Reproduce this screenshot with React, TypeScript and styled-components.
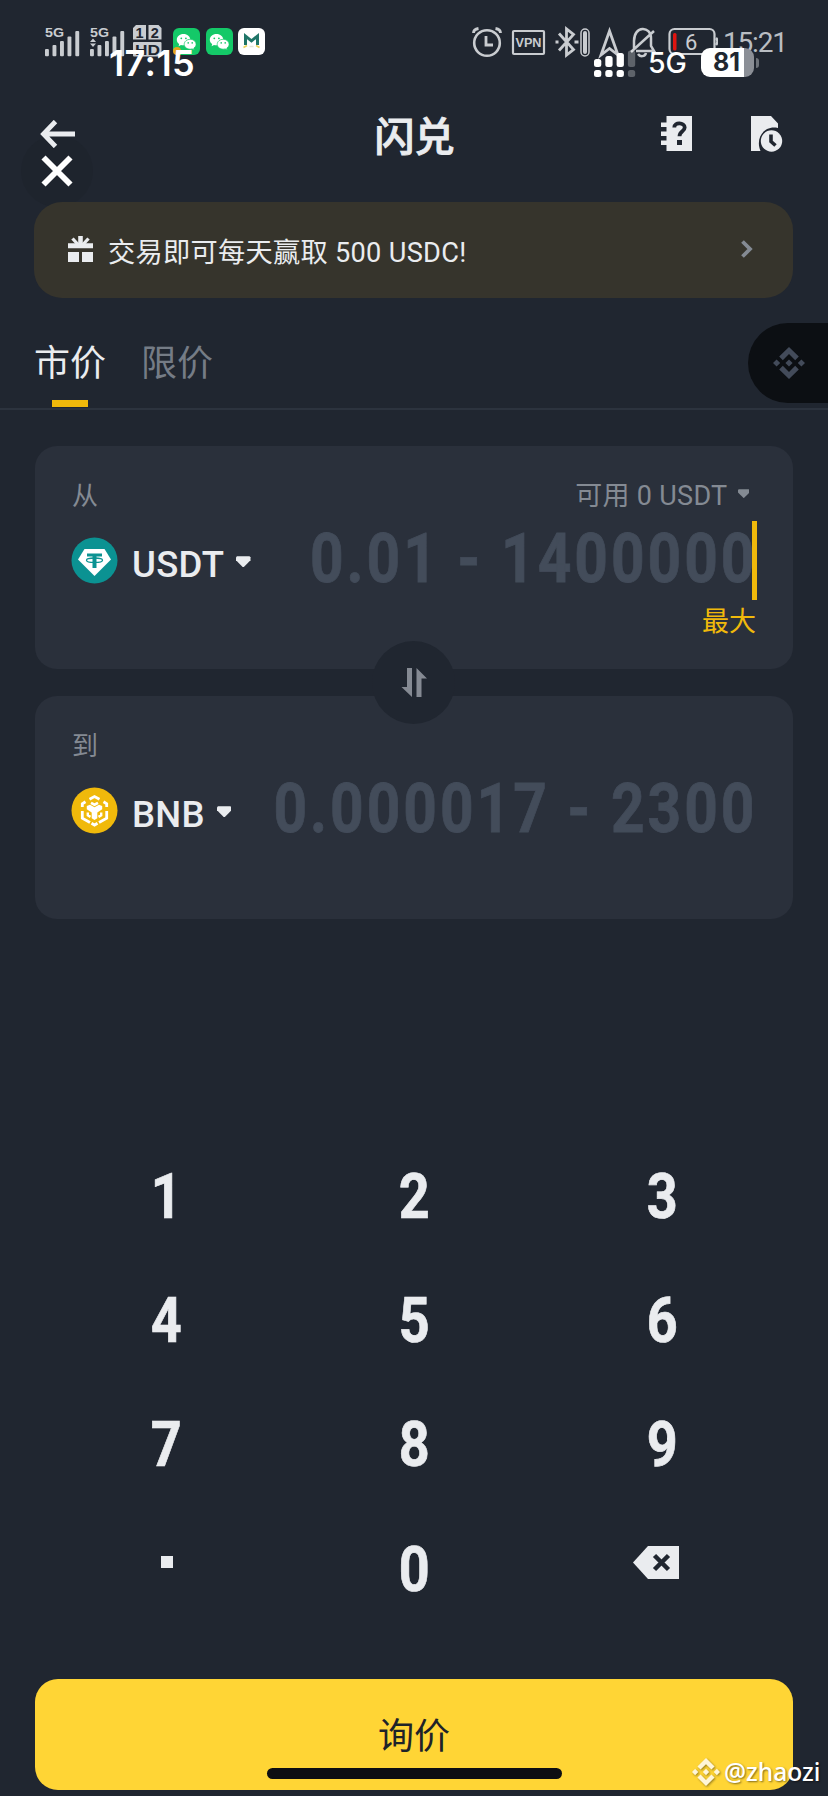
import React from 'react';
import styled, { createGlobalStyle } from 'styled-components';

const SANS = `Roboto, "Noto Sans CJK SC", sans-serif`;
const colors = {
  bg: '#202630',
  card: '#2a303b',
  text: '#eaecef',
  muted: '#848a93',
  faint: '#434c5a',
  gold: '#f0b90b',
  dim: '#c9ccd0',
};

const GlobalStyle = createGlobalStyle`
  * { box-sizing: border-box; }
  html, body { margin: 0; padding: 0; background: ${colors.bg}; }
  body { font-family: ${SANS}; color: ${colors.text}; }
  svg { display: block; flex: none; }
  button { background: none; border: 0; padding: 0; margin: 0; font: inherit; color: inherit; }
`;

const Screen = styled.div`
  position: relative;
  width: 828px;
  height: 1796px;
  overflow: hidden;
  background: ${colors.bg};
  display: flex;
  flex-direction: column;
`;

const DeviceBar = styled.div`
  display: flex;
  justify-content: space-between;
  height: 100px;
  padding: 25px 43px 0 45px;
  flex: none;
`;

const BarGroup = styled.div<{ $gap: number; $indent?: number }>`
  display: flex;
  align-items: flex-start;
  gap: ${(p) => p.$gap}px;
  margin-left: ${(p) => p.$indent ?? 0}px;
  height: 34px;
`;

const AppBadge = styled.div<{ $bg: string }>`
  width: 27px;
  height: 27px;
  margin-top: 3px;
  border-radius: 6px;
  background: ${(p) => p.$bg};
  display: flex;
  align-items: center;
  justify-content: center;
`;

const DeviceClock = styled.div`
  font-size: 28px;
  font-weight: 400;
  line-height: 34px;
  letter-spacing: -1.2px;
  color: #b9bdc2;
  padding-top: 1px;
  width: 62px;
  white-space: nowrap;
`;

const OverlayClock = styled.div`
  position: absolute;
  left: 109px;
  top: 42px;
  font-family: Inter, sans-serif;
  font-weight: 600;
  font-size: 36px;
  line-height: 42px;
  letter-spacing: 0.4px;
  color: #fff;
`;

const OverlayStatus = styled.div`
  position: absolute;
  left: 594px;
  top: 48px;
  height: 30px;
  display: flex;
  align-items: center;
  font-family: Inter, sans-serif;
  color: #fff;
`;

const NetworkLabel = styled.span`
  margin-left: 12px;
  width: 53px;
  font-size: 28.5px;
  font-weight: 500;
  line-height: 30px;
`;

const BatteryPill = styled.div`
  width: 53px;
  height: 29px;
  margin-top: -2px;
  border-radius: 9px;
  background: linear-gradient(90deg, #fff 0 43px, #8b8f96 43px);
  color: ${colors.bg};
  font-size: 25px;
  font-weight: 700;
  line-height: 29px;
  padding-left: 12px;
`;

const BatteryNub = styled.div`
  width: 3px;
  height: 10px;
  margin-left: 2px;
  border-radius: 0 4px 4px 0;
  background: #6d7279;
`;

const Header = styled.header`
  position: relative;
  z-index: 1;
  display: grid;
  grid-template-columns: 1fr auto 1fr;
  align-items: center;
  height: 68px;
  padding: 0 45px 0 40px;
  flex: none;
`;

const Title = styled.h1`
  margin: 0;
  padding: 8px 0 0 6px;
  font-size: 40px;
  font-weight: 500;
  line-height: 56px;
  -webkit-text-stroke: 0.9px ${colors.text};
`;

const HeaderActions = styled.div`
  display: flex;
  justify-content: flex-end;
  gap: 59px;
`;

const CloseButton = styled.button`
  position: absolute;
  left: 21px;
  top: 135px;
  width: 72px;
  height: 72px;
  border-radius: 50%;
  background: #1e242d;
  display: flex;
  align-items: center;
  justify-content: center;
`;

const Banner = styled.div`
  position: relative;
  display: flex;
  align-items: center;
  height: 96px;
  margin: 34px 35px 0 34px;
  padding: 0 40px 0 34px;
  border-radius: 28px;
  background: #36342c;
  font-size: 27.2px;
  line-height: 40px;
  flex: none;
`;

const BannerText = styled.span`
  flex: 1;
  padding: 5px 0 0 15px;
  letter-spacing: 0.3px;
  white-space: nowrap;
`;

const Tabs = styled.nav`
  display: flex;
  gap: 35px;
  height: 112px;
  padding: 38px 34px 1px;
  border-bottom: 2px solid #2c333e;
  flex: none;
`;

const Tab = styled.div<{ $active?: boolean }>`
  display: flex;
  flex-direction: column;
  align-items: center;
  justify-content: space-between;
  font-size: 36px;
  line-height: 56px;
  color: ${(p) => (p.$active ? colors.text : '#757c86')};
  &::after {
    content: '';
    width: 36px;
    height: 7px;
    background: ${(p) => (p.$active ? colors.gold : 'transparent')};
  }
`;

const FloatButton = styled.button`
  position: absolute;
  right: 0;
  top: 323px;
  width: 80px;
  height: 80px;
  border-radius: 40px 0 0 40px;
  background: #0c0f13;
  display: flex;
  align-items: center;
  padding-left: 25px;
`;

const Cards = styled.section`
  position: relative;
  display: flex;
  flex-direction: column;
  gap: 27px;
  padding: 36px 35px 0;
  flex: none;
`;

const Card = styled.div`
  height: 223px;
  border-radius: 22px;
  background: ${colors.card};
  padding: 30px 36px 0;
`;

const LabelRow = styled.div`
  display: flex;
  justify-content: space-between;
  align-items: center;
  height: 40px;
  padding-left: 1px;
  font-size: 26px;
  line-height: 40px;
  color: ${colors.muted};
`;

const Available = styled.div`
  display: flex;
  align-items: center;
  gap: 10px;
  padding-right: 8px;
  font-size: 27px;
  letter-spacing: 0.3px;
  svg { margin-top: -5px; }
`;

const AmountRow = styled.div`
  display: flex;
  align-items: center;
  height: 88px;
`;

const Symbol = styled.span`
  margin: 9px 12px 0 14px;
  font-size: 36.5px;
  font-weight: 500;
  line-height: 44px;
  letter-spacing: 0.3px;
`;

const Amount = styled.div`
  position: relative;
  flex: 1;
  min-width: 0;
  display: flex;
  justify-content: flex-end;
  height: 80px;
  white-space: nowrap;
`;

const Range = styled.span`
  font-size: 69px;
  font-weight: 700;
  line-height: 78px;
  letter-spacing: 3.5px;
  color: ${colors.faint};
  -webkit-text-stroke: 0.8px ${colors.faint};
  transform: scaleX(0.85);
  transform-origin: right center;
`;

const Caret = styled.i`
  position: absolute;
  right: 0;
  top: 1px;
  width: 5px;
  height: 79px;
  background: ${colors.gold};
`;

const MaxLink = styled.div`
  text-align: right;
  font-size: 27px;
  line-height: 36px;
  padding-right: 1px;
  color: ${colors.gold};
`;

const SwapButton = styled.button`
  position: absolute;
  left: 372px;
  top: 231px;
  width: 83px;
  height: 83px;
  border-radius: 50%;
  background: ${colors.bg};
  display: flex;
  align-items: center;
  justify-content: center;
`;

const Keypad = styled.div`
  display: grid;
  grid-template-columns: repeat(3, 248px);
  grid-auto-rows: 124.4px;
  justify-content: center;
  margin-top: 213px;
  flex: none;
`;

const Key = styled.button`
  display: flex;
  align-items: center;
  justify-content: center;
  font-size: 63.5px;
  font-weight: 700;
  line-height: 76px;
`;

const Digit = styled.span`
  margin-top: 5px;
  transform: scaleX(0.85);
  -webkit-text-stroke: 0.7px ${colors.text};
`;

const DotKey = styled.span`
  width: 12px;
  height: 12px;
  background: ${colors.text};
  margin: 0 0 11px 2px;
`;

const KeyIcon = styled.span`
  margin: 0 12px 10px 0;
`;

const QuoteButton = styled.button`
  height: 111px;
  margin: auto 35px 6px;
  padding-top: 5px;
  border-radius: 23px;
  background: #ffd535;
  color: #1e2329;
  font-size: 36px;
  line-height: 106px;
  flex: none;
`;

const HomeIndicator = styled.div`
  position: absolute;
  left: 267px;
  top: 1768px;
  width: 295px;
  height: 11px;
  border-radius: 6px;
  background: #0d0e12;
`;

const Watermark = styled.div`
  position: absolute;
  left: 692px;
  top: 1754px;
  height: 36px;
  display: flex;
  align-items: center;
  gap: 4px;
  font-family: "Noto Sans", sans-serif;
  font-size: 24.6px;
  font-weight: 500;
  line-height: 36px;
  color: #fff;
  text-shadow: 1px 1px 2px rgba(0, 0, 0, 0.5);
  svg { filter: drop-shadow(1px 1px 1px rgba(0, 0, 0, 0.4)); }
`;

const Signal = ({ data = false }: { data?: boolean }) => (
  <svg width="35" height="32" viewBox="0 0 35 32" fill={colors.dim}>
    <text x="0" y="12.2" fontFamily="Liberation Sans" fontWeight="700" fontSize="12.5" textLength="19" lengthAdjust="spacingAndGlyphs">5G</text>
    {data && <path d="M0 17 3 13.500 6 17zM0 18.500 3 22 6 18.500z" />}
    <rect x="0" y="24" width="3.900" height="7.300" rx="1" />
    <rect x="7.500" y="20" width="3.900" height="11.300" rx="1" />
    <rect x="15" y="16" width="3.900" height="15.300" rx="1" />
    <rect x="22.500" y="11.500" width="3.900" height="19.800" rx="1" />
    <rect x="30.300" y="6" width="3.900" height="25.300" rx="1" />
  </svg>
);

const SimHd = () => (
  <svg width="29" height="32" viewBox="0 0 29 32">
    <g fill={colors.dim}>
      <path d="M3 0H13V14.500H0V3zM15.500 0H25.500L28.500 3V14.500H15.500z" />
      <rect y="17" width="28.500" height="14.500" rx="1" />
    </g>
    <g fill={colors.bg} fontFamily="Liberation Sans" fontWeight="700">
      <text x="2.500" y="12.500" fontSize="14.500">1</text>
      <text x="17.800" y="12.500" fontSize="14.500">2</text>
      <text x="2" y="30" fontSize="15.500" textLength="25" lengthAdjust="spacingAndGlyphs">HD</text>
    </g>
  </svg>
);

const WeChat = () => (
  <svg width="21" height="18" viewBox="0 0 21 18">
    <path d="M7.500 1C3.600 1 .8 3.500.8 6.700c0 1.800.9 3.300 2.400 4.400L2.600 13.200 5 12c4.500 1 9.300-1.500 9.300-5.300C14.300 3.500 11.300 1 7.500 1z" fill="#fff" />
    <path d="M14.200 6.300c-3.300 0-6 2.200-6 5s2.700 4.900 6 4.900c.7 0 1.400-.1 2-.3l2.100 1.100-.5-1.900c1.400-.9 2.300-2.300 2.300-3.800 0-2.800-2.600-5-5.900-5z" fill="#fff" stroke="#14c968" strokeWidth=".7" />
    <g fill="#14c968"><circle cx="5.300" cy="5.300" r=".9" /><circle cx="9.900" cy="5.300" r=".9" /><circle cx="12.200" cy="9.900" r=".8" /><circle cx="16.200" cy="9.900" r=".8" /></g>
  </svg>
);

const MLogo = () => (
  <svg width="19" height="19" viewBox="0 0 19 19" fill="none">
    <path d="M3.500 13V4L9.500 8.800 15.500 4V13" stroke="#1f7568" strokeWidth="3" />
    <path d="M1.500 15.500 5 13.500M17.500 15.500 14 13.500" stroke="#ead45a" strokeWidth="1.600" />
    <path d="M7.500 14.500h4" stroke="#e5e5d8" strokeWidth="1.500" />
  </svg>
);

const OrangeDot = styled.i`
  position: absolute;
  left: 173px;
  top: 47px;
  width: 8px;
  height: 8px;
  border-radius: 50%;
  background: #e5a61c;
`;

const line = { fill: 'none', stroke: colors.dim, strokeWidth: 2.2 };

const DeviceIcons = () => (
  <svg width="246" height="34" viewBox="472 25 246 34" {...line}>
    <circle cx="487" cy="43" r="12.800" strokeWidth="2.600" />
    <path d="M486 36v9h7M473.500 33c0-2 2-4 5-4.500M500.500 33c0-2-2-4-5-4.500" strokeWidth="2.800" />
    <rect x="513" y="31" width="31" height="23" rx="1" />
    <text x="515.500" y="47" fontFamily="Liberation Sans" fontWeight="700" fontSize="12.500" textLength="26" lengthAdjust="spacingAndGlyphs" fill={colors.dim} stroke="none">VPN</text>
    <path d="M559 33.500 573.500 49.500 566.500 55V29L573.500 34.500 559 50.500" strokeWidth="2.800" />
    <path d="M555.500 42h3M574.500 42h4" strokeWidth="3" />
    <rect x="581" y="29" width="8" height="27" rx="4" strokeWidth="1.500" />
    <rect x="583" y="31" width="4" height="23" rx="2" fill={colors.dim} stroke="none" />
    <path d="M609.500 31 601 55 609.500 48.500 618 55z" strokeWidth="2.800" />
    <path d="M634 50V41c0-16 17-15 17-3v8l3 5h-18M631 52 654 31M638 54c2 3 7 3 8-1" strokeWidth="2.500" />
    <rect x="669.500" y="29" width="45" height="25" rx="5" />
    <path d="M716 38q3 3 0 7" strokeWidth="2.500" />
    <rect x="673" y="33" width="3.500" height="17.500" rx="1.500" fill="#e01510" stroke="none" />
    <text x="685" y="49.500" fontFamily="Roboto" fontSize="22" fill={colors.dim} stroke="none">6</text>
  </svg>
);

const CellDots = () => (
  <svg width="42" height="27" viewBox="0 0 42 27" fill="#fff">
    {[0, 11.3, 22.6, 33.9].map((x, i) => (
      <g key={x} opacity={i === 3 ? 0.28 : 1}>
        <rect x={x} y={[9, 6, 3, 0.5][i]} width="7.300" height={[8, 11, 14, 16.5][i]} rx="2.500" />
        <rect x={x} y="20" width="7.300" height="7" rx="2.500" />
      </g>
    ))}
  </svg>
);

const BackArrow = () => (
  <svg width="36" height="28" viewBox="0 0 36 28" fill="none" stroke={colors.text} strokeWidth="4.800">
    <path d="M35 14H3M15.500 1.500 3.500 14l12 12.500" />
  </svg>
);

const CloseIcon = () => (
  <svg width="32" height="32" viewBox="0 0 32 32" stroke="#fff" strokeWidth="5.800">
    <path d="M2.500 2.500l27 27M29.500 2.500l-27 27" />
  </svg>
);

const HelpBook = () => (
  <svg width="31" height="35" viewBox="0 0 31 35">
    <path d="M5.500 0H31V35H5.500V29H0V24.500H5.500V20H0V15.500H5.500V11H0V6.500H5.500z" fill={colors.text} />
    <path d="M13.300 11.500c0-6 10.400-5 10.400 0 0 4-5.200 3.500-5.200 8.800" fill="none" stroke={colors.bg} strokeWidth="3.800" />
    <rect x="16" y="24" width="5" height="5" fill={colors.bg} />
  </svg>
);

const HistoryDoc = () => (
  <svg width="32" height="36" viewBox="0 0 32 36">
    <path d="M0 0H20L27 7.500V12C13 9 4 22 9.500 35H0z" fill={colors.text} />
    <circle cx="20.500" cy="25" r="10.700" fill={colors.text} />
    <path d="M20 18.500v7l4.500 4" fill="none" stroke={colors.bg} strokeWidth="3.600" />
  </svg>
);

const Gift = () => (
  <svg width="25" height="29" viewBox="0 0 25 29" fill={colors.text}>
    <path d="M0 7.300H25V12.300H0zM0 16H11V26H0zM14 16H25V26H14z" />
    <path d="M12.500 9V0" stroke={colors.text} strokeWidth="4.600" />
    <path d="M10.500 9 4.500 2.500M14.500 9l6-6.500" stroke={colors.text} strokeWidth="3.300" />
  </svg>
);

const Chevron = () => (
  <svg width="12" height="21" viewBox="0 0 12 21" fill="none" stroke={colors.muted} strokeWidth="3.800">
    <path d="M1.500 1.500 9 9l-7.500 7.500" />
  </svg>
);

const BinanceMark = ({ size, color }: { size: number; color: string }) => (
  <svg width={size} height={size} viewBox="0 0 32 32" fill={color}>
    <path d="M9.800 13.200 16 7l6.200 6.200 3.600-3.600L16 0 6.200 9.600zM0 16l3.600-3.600L7.200 16l-3.600 3.600zM9.800 18.800 16 25l6.200-6.200 3.600 3.600L16 32l-9.800-9.600zM24.800 16l3.600-3.600L32 16l-3.600 3.600zM12.400 16 16 12.400l3.600 3.600-3.600 3.600z" />
  </svg>
);

const Tether = () => (
  <svg width="47" height="47" viewBox="0 0 47 47">
    <circle cx="23.500" cy="23.500" r="23" fill="#0b9292" />
    <path d="M13.500 12H33.500L40 22.500 23.500 39 7 22.500z" fill="#fff" />
    <g fill="none" stroke="#0b9292">
      <path d="M16 18H31" strokeWidth="3" />
      <path d="M23.500 18V31" strokeWidth="4" />
      <ellipse cx="23.500" cy="23.200" rx="8" ry="2.200" strokeWidth="1.300" />
    </g>
  </svg>
);

const Bnb = () => (
  <svg width="47" height="47" viewBox="0 0 47 47">
    <circle cx="23.500" cy="23.500" r="23" fill={colors.gold} />
    <g fill="none" stroke="#fff" strokeWidth="2.800">
      <path d="M18.500 12.300 23.500 9.500l5 2.800M11.300 20V16.800L14.500 14.800M32.500 14.800l3.200 2V20M11.300 24V31.200L19 35.500M35.700 24V31.200L28 35.500M20.500 36.200 23.500 38l3-1.800" />
      <path d="M20 15.800 23.500 17.700l3.500-1.900" strokeWidth="2.600" />
      <path d="M16.800 25.500v2.800l2.700 1.600M30.200 25.500v2.800l-2.700 1.600" strokeWidth="2.400" />
    </g>
    <path d="M15.800 19 19 17.700 23.500 20.300 28 17.700 31.200 19V22.300L26.300 25.500V31.200L23.500 33 20.700 31.200V25.500L15.800 22.300z" fill="#fff" />
  </svg>
);

const Triangle = ({ w, color }: { w: number; color: string }) => (
  <svg width={w} height={w * 0.8} viewBox="0 0 15 12" fill={color}>
    <path d="M1 .3H14L15 1.300V4.500L7.500 12 0 4.500V1.300z" />
  </svg>
);

const SwapIcon = () => (
  <svg width="26" height="29" viewBox="0 0 26 29" fill="#858a93">
    <path d="M6 0H11V29L.500 19H6zM15.500 0 26 10.500H20.500V29h-5z" />
  </svg>
);

const Backspace = () => (
  <svg width="46" height="33" viewBox="0 0 46 33">
    <path d="M15 0H46V33H15L0 16.500z" fill={colors.text} />
    <path d="M21.500 9.500l14 14M35.500 9.500l-14 14" stroke={colors.bg} strokeWidth="4.500" />
  </svg>
);

const Dropdown = styled.span`
  margin-top: 3px;
`;

interface TokenCardProps {
  label: string;
  symbol: string;
  icon: React.ReactNode;
  range: string;
  available?: string;
  focused?: boolean;
}

const TokenCard = ({ label, symbol, icon, range, available, focused }: TokenCardProps) => (
  <Card>
    <LabelRow>
      <span>{label}</span>
      {available && (
        <Available>
          {available}
          <Triangle w={11.5} color={colors.muted} />
        </Available>
      )}
    </LabelRow>
    <AmountRow>
      {icon}
      <Symbol>{symbol}</Symbol>
      <Dropdown><Triangle w={14.5} color={colors.text} /></Dropdown>
      <Amount>
        <Range>{range}</Range>
        {focused && <Caret />}
      </Amount>
    </AmountRow>
    {focused && <MaxLink>最大</MaxLink>}
  </Card>
);

export default function App() {
  return (
    <Screen>
      <GlobalStyle />
      <DeviceBar>
        <BarGroup $gap={0}>
          <Signal />
          <BarGroup $gap={8} $indent={10}>
            <Signal data />
            <SimHd />
          </BarGroup>
          <BarGroup $gap={5.5} $indent={11}>
            <AppBadge $bg="#14c968"><WeChat /></AppBadge>
            <AppBadge $bg="#14c968"><WeChat /></AppBadge>
            <AppBadge $bg="#fff"><MLogo /></AppBadge>
          </BarGroup>
        </BarGroup>
        <BarGroup $gap={5}>
          <DeviceIcons />
          <DeviceClock>15:21</DeviceClock>
        </BarGroup>
      </DeviceBar>
      <OrangeDot />
      <OverlayClock>17:15</OverlayClock>
      <OverlayStatus>
        <CellDots />
        <NetworkLabel>5G</NetworkLabel>
        <BatteryPill>81</BatteryPill>
        <BatteryNub />
      </OverlayStatus>

      <Header>
        <BackArrow />
        <Title>闪兑</Title>
        <HeaderActions>
          <HelpBook />
          <HistoryDoc />
        </HeaderActions>
      </Header>
      <CloseButton aria-label="close"><CloseIcon /></CloseButton>

      <Banner>
        <Gift />
        <BannerText>交易即可每天赢取 500 USDC!</BannerText>
        <Chevron />
      </Banner>

      <Tabs>
        <Tab $active>市价</Tab>
        <Tab>限价</Tab>
      </Tabs>
      <FloatButton aria-label="shortcuts"><BinanceMark size={32} color="#434b5a" /></FloatButton>

      <Cards>
        <TokenCard label="从" symbol="USDT" icon={<Tether />} range="0.01 - 1400000" available="可用 0 USDT" focused />
        <TokenCard label="到" symbol="BNB" icon={<Bnb />} range="0.000017 - 2300" />
        <SwapButton aria-label="swap"><SwapIcon /></SwapButton>
      </Cards>

      <Keypad>
        {['1', '2', '3', '4', '5', '6', '7', '8', '9'].map((n) => (
          <Key key={n}><Digit>{n}</Digit></Key>
        ))}
        <Key aria-label="decimal point"><DotKey /></Key>
        <Key><Digit>0</Digit></Key>
        <Key aria-label="delete"><KeyIcon><Backspace /></KeyIcon></Key>
      </Keypad>

      <QuoteButton>询价</QuoteButton>
      <HomeIndicator />
      <Watermark>
        <BinanceMark size={28} color="#fff6d8" />
        @zhaozi
      </Watermark>
    </Screen>
  );
}
